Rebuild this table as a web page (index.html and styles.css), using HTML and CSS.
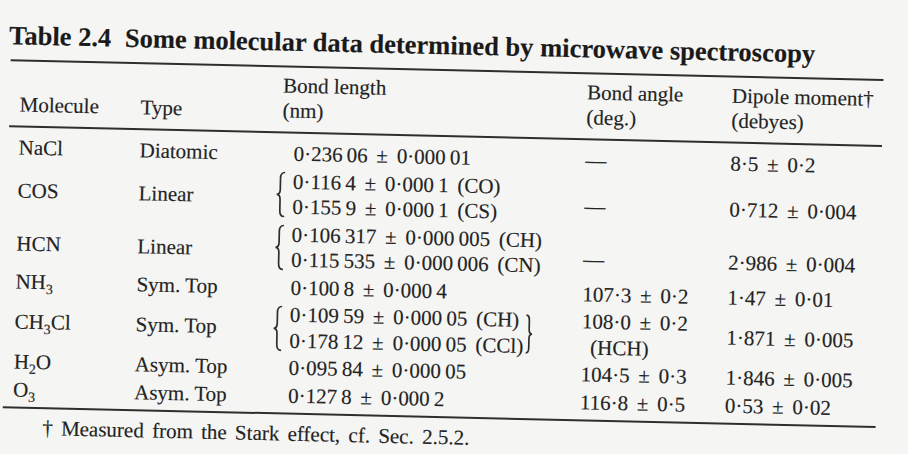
FILE: index.html
```html
<!DOCTYPE html>
<html lang="en">
<head>
<meta charset="utf-8">
<title>Table 2.4</title>
<link rel="stylesheet" href="styles.css">
</head>
<body>
<div class="page">
  <h1 class="title"><span class="tnum">Table 2.4</span> Some molecular data determined by microwave spectroscopy</h1>
  <div class="table">
    <div class="head grid">
      <div>Molecule</div>
      <div>Type</div>
      <div class="hbond">Bond length<br>(nm)</div>
      <div>Bond angle<br>(deg.)</div>
      <div>Dipole moment†<br>(debyes)</div>
    </div>
    <div class="body grid">
      <!-- NaCl -->
      <div>NaCl</div>
      <div>Diatomic</div>
      <div class="bond num"><div class="lines"><span>0·236&thinsp;06 ± 0·000&thinsp;01</span></div></div>
      <div class="num">—</div>
      <div class="num">8·5 ± 0·2</div>
      <!-- COS -->
      <div class="low">COS</div>
      <div class="low">Linear</div>
      <div class="bond num">
        <svg class="brace" width="18" height="48" viewBox="0 0 18 48"><path d="M10 2 C6.5 2 5.5 4 5.5 8 L5.5 19 C5.5 22.5 4.5 24 2 24 C4.5 24 5.5 25.5 5.5 29 L5.5 40 C5.5 44 6.5 46 10 46"/></svg>
        <div class="lines"><span>0·116&thinsp;4 ± 0·000&thinsp;1 (CO)</span><span>0·155&thinsp;9 ± 0·000&thinsp;1 (CS)</span></div>
      </div>
      <div class="num lower">—</div>
      <div class="num lower">0·712 ± 0·004</div>
      <!-- HCN -->
      <div class="low">HCN</div>
      <div class="low">Linear</div>
      <div class="bond num">
        <svg class="brace" width="18" height="48" viewBox="0 0 18 48"><path d="M10 2 C6.5 2 5.5 4 5.5 8 L5.5 19 C5.5 22.5 4.5 24 2 24 C4.5 24 5.5 25.5 5.5 29 L5.5 40 C5.5 44 6.5 46 10 46"/></svg>
        <div class="lines"><span>0·106&thinsp;317 ± 0·000&thinsp;005 (CH)</span><span>0·115&thinsp;535 ± 0·000&thinsp;006 (CN)</span></div>
      </div>
      <div class="num lower">—</div>
      <div class="num lower">2·986 ± 0·004</div>
      <!-- NH3 -->
      <div>NH<sub>3</sub></div>
      <div>Sym. Top</div>
      <div class="bond num"><div class="lines"><span>0·100&thinsp;8 ± 0·000&thinsp;4</span></div></div>
      <div class="num">107·3 ± 0·2</div>
      <div class="num">1·47 ± 0·01</div>
      <!-- CH3Cl -->
      <div>CH<sub>3</sub>Cl</div>
      <div>Sym. Top</div>
      <div class="bond num">
        <svg class="brace" width="18" height="48" viewBox="0 0 18 48"><path d="M10 2 C6.5 2 5.5 4 5.5 8 L5.5 19 C5.5 22.5 4.5 24 2 24 C4.5 24 5.5 25.5 5.5 29 L5.5 40 C5.5 44 6.5 46 10 46"/></svg>
        <div class="lines"><span>0·109&thinsp;59 ± 0·000&thinsp;05 (CH)</span><span>0·178&thinsp;12 ± 0·000&thinsp;05 (CCl)</span></div>
        <svg class="rbrace" width="9" height="42" viewBox="0 0 9 42"><path d="M1.5 2 C4 2 4.5 4 4.5 7.5 L4.5 16.5 C4.5 19.5 5.5 21 7.5 21 C5.5 21 4.5 22.5 4.5 25.5 L4.5 34.5 C4.5 38 4 40 1.5 40"/></svg>
      </div>
      <div class="num"><div class="lines"><span>108·0 ± 0·2</span><span class="hch">(HCH)</span></div></div>
      <div class="num">1·871 ± 0·005</div>
      <!-- H2O -->
      <div>H<sub>2</sub>O</div>
      <div>Asym. Top</div>
      <div class="bond num"><div class="lines"><span>0·095&thinsp;84 ± 0·000&thinsp;05</span></div></div>
      <div class="num">104·5 ± 0·3</div>
      <div class="num">1·846 ± 0·005</div>
      <!-- O3 -->
      <div>O<sub>3</sub></div>
      <div>Asym. Top</div>
      <div class="bond num"><div class="lines"><span>0·127&thinsp;8 ± 0·000&thinsp;2</span></div></div>
      <div class="num">116·8 ± 0·5</div>
      <div class="num">0·53 ± 0·02</div>
    </div>
  </div>
  <p class="foot">† Measured from the Stark effect, cf. Sec. 2.5.2.</p>
</div>
</body>
</html>
```
FILE: styles.css
```css
html, body {
  margin: 0;
  padding: 0;
}
body {
  width: 908px;
  height: 454px;
  overflow: hidden;
  background: #f5f5f3;
  font-family: "Liberation Serif", "Times New Roman", serif;
  color: #232323;
}
.page {
  width: 880px;
  padding: 20px 0 0 10px;
  transform: rotate(1.3deg);
  transform-origin: 0 0;
  -webkit-text-stroke: 0.15px #232323;
}
.title {
  margin: 0;
  font-size: 26.5px;
  line-height: 30px;
  font-weight: bold;
  color: #1a1a1a;
  white-space: nowrap;
}
.tnum {
  margin-right: 7px;
}
.table {
  margin: 9px 0 0 2px;
  width: 873px;
  border-top: 2px solid #2e2e2e;
  border-bottom: 2px solid #2e2e2e;
  font-size: 21px;
}
.grid {
  display: grid;
  grid-template-columns: 121px 136px 310px 145px 1fr;
  padding-left: 10px;
}
.head {
  line-height: 25px;
  padding: 6px 0 8px 10px;
  border-bottom: 2px solid #2e2e2e;
  align-items: end;
  white-space: nowrap;
}
.hbond {
  padding-left: 6px;
}
.body {
  line-height: 25.5px;
  padding: 8px 0 4px 10px;
  row-gap: 2px;
  align-items: center;
  white-space: nowrap;
}
.num {
  word-spacing: 3.5px;
}
.low {
  padding-top: 6px;
}
.lower {
  padding-top: 12px;
}
.bond {
  display: flex;
  align-items: center;
  padding-left: 18px;
}
.lines {
  display: flex;
  flex-direction: column;
}
.brace {
  margin-left: -18px;
  flex: none;
}
.brace path, .rbrace path {
  fill: none;
  stroke: #2e2e2e;
  stroke-width: 1.7;
}
.rbrace {
  flex: none;
  margin-left: 1px;
}
.hch {
  padding-left: 9px;
}
sub {
  font-size: 14px;
  line-height: 0;
  vertical-align: -5px;
}
.foot {
  margin: 7px 0 0 42px;
  font-size: 21px;
  line-height: 24px;
  word-spacing: 3px;
  white-space: nowrap;
}
```
